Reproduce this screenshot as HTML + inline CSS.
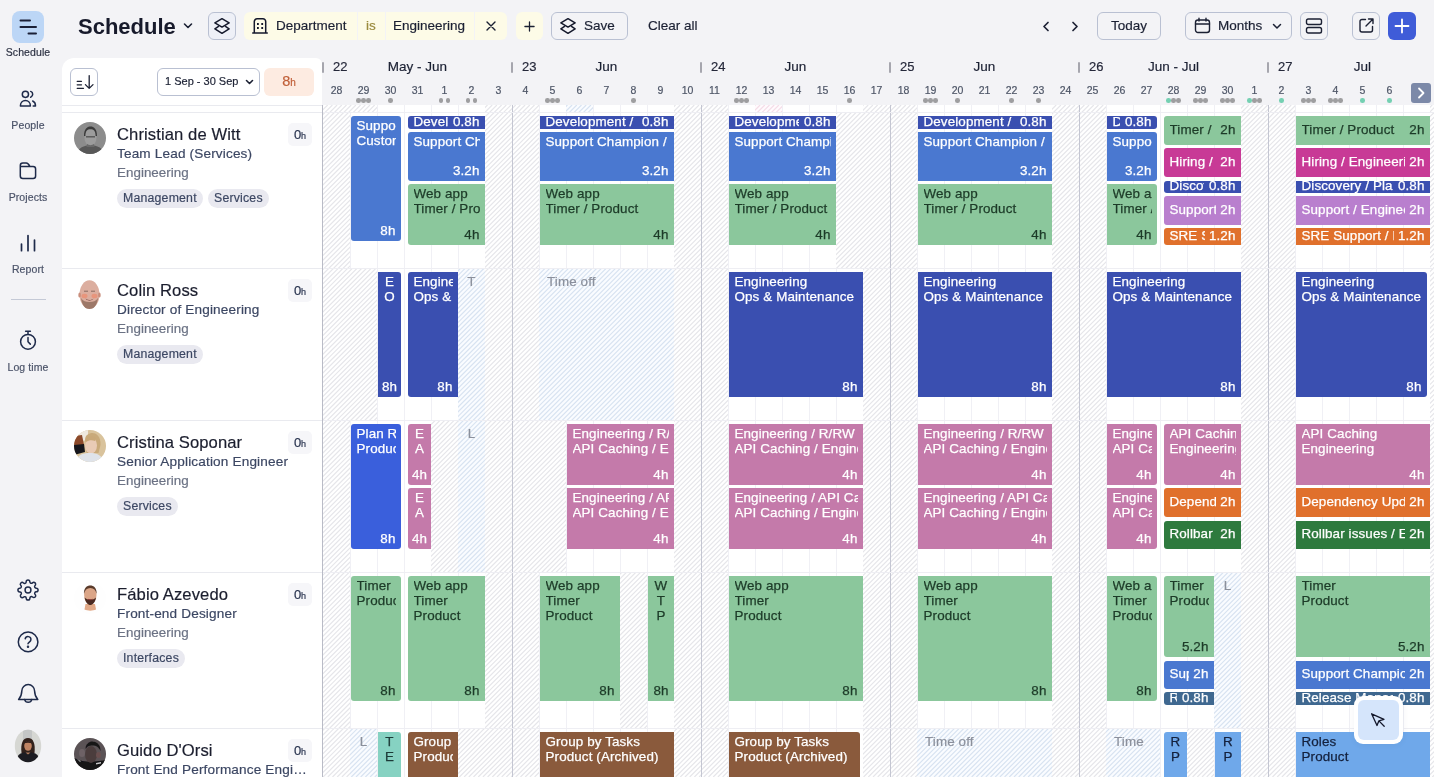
<!DOCTYPE html><html><head><meta charset="utf-8"><title>Schedule</title><style>
*{box-sizing:border-box;margin:0;padding:0}
html,body{width:1434px;height:777px;overflow:hidden;background:#f3f3f6;font-family:"Liberation Sans",sans-serif;color:#1b2033}
.abs{position:absolute}
#app{position:absolute;left:0;top:0;width:1434px;height:777px;will-change:transform;-webkit-text-stroke:0.18px currentColor}
#ttl{-webkit-text-stroke:0}
#side{position:absolute;left:0;top:0;width:57px;height:777px}
.slabel{position:absolute;left:0;width:56px;text-align:center;font-size:10.5px;color:#4a5268;letter-spacing:0.1px}
.btn{position:absolute;border:1px solid #b9c0d2;border-radius:6px;background:#f3f3f6}
.toptxt{position:absolute;font-size:13.5px;color:#1b2033;white-space:nowrap;line-height:16px}
#panel{position:absolute;left:62px;top:57.700px;width:260.300px;height:730px;background:#fff;border-radius:12px 6px 0 0;}
#panel:after{content:"";position:absolute;right:-1.200px;top:47.500px;bottom:0;width:1.300px;background:#b9bbc6}
.prow{position:absolute;left:62px;width:260px;border-top:1px solid #e9eaef}
.pname{position:absolute;left:55px;font-size:16.6px;color:#1b1e2e;white-space:nowrap;line-height:20px;letter-spacing:0.1px}
.ptitle{position:absolute;left:55px;font-size:13.6px;color:#3c4763;white-space:nowrap;line-height:16px;width:193px;overflow:hidden;text-overflow:ellipsis;letter-spacing:0.15px}
.pdept{position:absolute;left:55px;font-size:13.4px;color:#6b7284;white-space:nowrap;line-height:16px;letter-spacing:0.02px}
.tag{position:absolute;height:19px;border-radius:10px;background:#e9e9f0;color:#3c4763;font-size:12.3px;line-height:18.2px;padding:0 6px;white-space:nowrap;letter-spacing:0.2px}
.zero{position:absolute;left:226px;width:24px;height:23px;border-radius:5px;background:#f6f6f9;color:#2a3550;font-size:13px;line-height:23px;text-align:center}
.zero small{font-size:9px}
.av{position:absolute;left:12px;width:32px;height:32px;border-radius:50%;overflow:hidden}
#grid{position:absolute;left:323px;top:105px;width:1111px;height:672px;background:#fff;overflow:hidden}
.cl{position:absolute;top:0;width:1px;height:672px;background:#f0f0f5}
.wl{position:absolute;top:0;width:1px;height:672px;background:#c4c6d2}
.rl{position:absolute;left:0;width:1111px;height:1px;background:#eeeef3}
.b{position:absolute;overflow:hidden;-webkit-text-stroke:0.25px currentColor;color:#fff;font-size:13.4px;line-height:15px;white-space:nowrap;letter-spacing:0.12px}
.b .t{position:absolute;left:5.5px;right:5.5px;top:2px;overflow:hidden}
.b .hr{position:absolute;right:5.5px;bottom:3px}
.b.one .t{top:50%;margin-top:-8.5px;}
.b.one .hr{top:50%;margin-top:-8.5px;bottom:auto}
.b.nar .t{left:0;right:0;text-align:center}
.b.nar .hr{left:0;right:0;text-align:center}
.tl{position:absolute;font-size:13.4px;line-height:15px;color:#8b909c;white-space:nowrap;letter-spacing:0.12px}
.wk{position:absolute;top:59px;font-size:13px;line-height:16px;color:#25283a}
.mo{position:absolute;top:59px;font-size:13.5px;line-height:16px;color:#1b2033;text-align:center;width:120px}
.dn{position:absolute;top:83.500px;width:27px;text-align:center;font-size:10.5px;line-height:12px;color:#4d5566}
.dot{position:absolute;top:98.200px;width:4.600px;height:4.600px;border-radius:50%;background:#9e9ea0}
.dot.g{background:#74d0b2}
.tick{position:absolute;top:61.500px;width:2px;height:11.500px;background:#a6a6ae;border-radius:1px}
</style></head><body><div id="app">
<svg width="0" height="0" style="position:absolute"><defs><filter id="bl" x="-10%" y="-10%" width="120%" height="120%"><feGaussianBlur stdDeviation="0.55"/></filter></defs></svg>
<div id="side">
<div class="abs" style="left:12px;top:10.5px;width:32px;height:32px;border-radius:8px;background:#bcd6f6"></div>
<svg class="abs" style="left:12px;top:10.5px" width="32" height="32" viewBox="0 0 32 32" fill="none" stroke="#1a1f36" stroke-width="2" stroke-linecap="round"><path d="M8.5 9.5H18M8.5 16H24M16.5 22.5H24"/></svg>
<div class="slabel" style="top:46px;color:#2b3042">Schedule</div>
<svg class="abs" style="left:0;top:0" width="57" height="777" viewBox="0 0 57 777" fill="none" stroke="#1e2a4a" stroke-width="1.500" stroke-linecap="round" stroke-linejoin="round">
<circle cx="25.400" cy="94.300" r="3.100"/><path d="M20.400 105.900C20.400 102.600 22.600 100.500 25.400 100.500S30.400 102.600 30.400 105.900Z"/><path d="M30.700 91.400A3.100 3.100 0 0 1 30.700 97.200"/><path d="M32.700 101C34.500 101.800 35.500 103.600 35.500 105.900H33.200"/>
<path d="M20.300 166.400V176a2.500 2.500 0 0 0 2.500 2.500H33.100a2.500 2.500 0 0 0 2.500-2.500V168.900a2.500 2.500 0 0 0-2.500-2.500H20.300V165.600a2.500 2.500 0 0 1 2.500-2.500H26.300c1.600 0 2.600 1.500 3.500 3.300"/>
<path d="M21.500 244v6.700M28 235.500v15.200M34.500 240v10.700" stroke-width="1.700"/>
<circle cx="28" cy="341.800" r="7.400"/><path d="M28 337.500v4.300l2.300 2.300M25.600 331.300h4.800M28 331.300v3"/>
<circle cx="28.100" cy="641.900" r="9.800"/><path d="M25.200 638.800a2.900 2.900 0 0 1 5.700 1c0 1.900-2.900 2.500-2.900 4"/><circle cx="28" cy="646.800" r=".500" fill="#1e2a4a"/>
<path d="M28.200 684.600a6.400 6.400 0 0 0-6.400 6.400c0 4.400-1.500 6.500-3.200 8.400h19.200c-1.700-1.900-3.200-4-3.200-8.400a6.400 6.400 0 0 0-6.400-6.400z"/><path d="M24.700 699.600a3.600 3.600 0 0 0 7 0"/>
</svg>
<div class="slabel" style="top:119px">People</div>
<div class="slabel" style="top:191px">Projects</div>
<div class="slabel" style="top:263px">Report</div>
<div class="abs" style="left:11px;top:298.500px;width:35px;height:1px;background:#c4c9d6"></div>
<div class="slabel" style="top:361px">Log time</div>
<svg class="abs" style="left:17.200px;top:579.400px" width="22" height="22" viewBox="0 0 24 24" fill="none" stroke="#1e2a4a" stroke-width="1.600" stroke-linecap="round" stroke-linejoin="round"><circle cx="12" cy="12" r="3.200"/><path d="M19.400 15a1.650 1.650 0 0 0 .330 1.820l.060.060a2 2 0 1 1-2.830 2.830l-.060-.060a1.650 1.650 0 0 0-1.820-.330 1.650 1.650 0 0 0-1 1.510V21a2 2 0 1 1-4 0v-.090a1.650 1.650 0 0 0-1.080-1.510 1.650 1.650 0 0 0-1.820.330l-.060.060a2 2 0 1 1-2.830-2.830l.060-.060a1.650 1.650 0 0 0 .330-1.820 1.650 1.650 0 0 0-1.510-1H3a2 2 0 1 1 0-4h.090A1.650 1.650 0 0 0 4.600 9a1.650 1.650 0 0 0-.330-1.820l-.060-.060a2 2 0 1 1 2.830-2.830l.060.060a1.650 1.650 0 0 0 1.820.330H9a1.650 1.650 0 0 0 1-1.510V3a2 2 0 1 1 4 0v.090a1.650 1.650 0 0 0 1 1.510 1.650 1.650 0 0 0 1.820-.330l.060-.060a2 2 0 1 1 2.830 2.830l-.060.060a1.650 1.650 0 0 0-.330 1.820V9a1.650 1.650 0 0 0 1.510 1H21a2 2 0 1 1 0 4h-.090a1.650 1.650 0 0 0-1.510 1z"/></svg>
<svg class="abs" style="left:14px;top:729px" width="28" height="34" viewBox="0 0 28 34"><defs><clipPath id="ua"><ellipse cx="14" cy="17" rx="13.200" ry="16.300"/></clipPath></defs><g clip-path="url(#ua)"><rect width="28" height="34" fill="#d6d7d3"/><g filter="url(#bl)"><rect x="9" y="0" width="9" height="12" fill="#c4c6c6"/><path d="M7.500 24c-1-9 1-15 6.500-15s7.500 6 6.500 15z" fill="#33211c"/><ellipse cx="14" cy="17" rx="3.800" ry="4.800" fill="#c08463"/><path d="M9.500 14.500c1-3 7-3.500 9 0-3-1-6-1-9 0z" fill="#33211c"/><path d="M1 36c1-10 5-13 13-13s12 3 13 13z" fill="#1c1b20"/><path d="M11.500 23.500l2.500 2 2.500-2z" fill="#b57c5e"/></g></g></svg>
</div>
<div class="abs" style="left:78px;top:11.5px;font-size:22px;font-weight:bold;line-height:30px;color:#171a2b;letter-spacing:0px" id="ttl">Schedule</div>
<svg class="abs" style="left:183px;top:22px" width="10" height="8" viewBox="0 0 10 8" fill="none" stroke="#1b2033" stroke-width="1.6" stroke-linecap="round" stroke-linejoin="round"><path d="M1.500 2l3.500 3.500L8.500 2"/></svg>
<div class="btn" style="left:208px;top:12px;width:28px;height:28px;background:#eef0f7"></div>
<svg class="abs" style="left:214px;top:18px" width="16" height="16" viewBox="0 0 16 16" fill="none" stroke="#14182b" stroke-width="1.500" stroke-linejoin="round"><path d="M8 .700L15.100 4.900 8 9.100.900 4.900z"/><path d="M4.900 8.200L.900 10.900 8 15.300l7.100-4.400-4-2.700"/></svg>
<div class="abs" style="left:244px;top:12px;width:113px;height:28px;background:#fdfbe7;border-radius:6px 0 0 6px"></div>
<div class="abs" style="left:358px;top:12px;width:26.500px;height:28px;background:#fdfbe7"></div>
<div class="abs" style="left:385.500px;top:12px;width:88.500px;height:28px;background:#fdfbe7"></div>
<div class="abs" style="left:475px;top:12px;width:31.500px;height:28px;background:#fdfbe7;border-radius:0 6px 6px 0"></div>
<svg class="abs" style="left:252px;top:18px" width="16" height="16" viewBox="0 0 16 16" fill="none" stroke="#14182b" stroke-width="1.500" stroke-linejoin="round" stroke-linecap="round"><path d="M2.300 15V3.600A2.800 2.800 0 0 1 5.100 .800h5.800a2.800 2.800 0 0 1 2.800 2.800V15M.700 15h14.600"/><path d="M5.900 5.900v.1M10.200 5.900v.1M5.900 9.900v.1M10.200 9.900v.1" stroke-width="1.800" stroke-linecap="square"/></svg>
<div class="toptxt" style="left:276px;top:18px" id="dep">Department</div>
<div class="toptxt" style="left:366px;top:18px;color:#9a8a3c">is</div>
<div class="toptxt" style="left:393px;top:18px" id="eng">Engineering</div>
<svg class="abs" style="left:486px;top:21px" width="10" height="10" viewBox="0 0 10 10" fill="none" stroke="#1b2033" stroke-width="1.400" stroke-linecap="round"><path d="M1 1l8 8M9 1l-8 8"/></svg>
<div class="abs" style="left:516px;top:12px;width:27px;height:28px;background:#fdfbe7;border-radius:6px"></div>
<svg class="abs" style="left:524px;top:20.500px" width="11" height="11" viewBox="0 0 12 12" fill="none" stroke="#1b2033" stroke-width="1.400" stroke-linecap="round"><path d="M6 1v10M1 6h10"/></svg>
<div class="btn" style="left:551px;top:12px;width:76.500px;height:28px"></div>
<svg class="abs" style="left:560px;top:18px" width="16" height="16" viewBox="0 0 16 16" fill="none" stroke="#14182b" stroke-width="1.500" stroke-linejoin="round"><path d="M8 .700L15.100 4.900 8 9.100.900 4.900z"/><path d="M4.900 8.200L.900 10.900 8 15.300l7.100-4.400-4-2.700"/></svg>
<div class="toptxt" style="left:584px;top:18px">Save</div>
<div class="toptxt" style="left:648px;top:18px" id="clr">Clear all</div>
<svg class="abs" style="left:1042px;top:21px" width="8" height="11" viewBox="0 0 8 11" fill="none" stroke="#1b2033" stroke-width="1.700" stroke-linecap="round" stroke-linejoin="round"><path d="M6 1.500L2 5.500l4 4"/></svg>
<svg class="abs" style="left:1071px;top:21px" width="8" height="11" viewBox="0 0 8 11" fill="none" stroke="#1b2033" stroke-width="1.700" stroke-linecap="round" stroke-linejoin="round"><path d="M2 1.500l4 4-4 4"/></svg>
<div class="btn" style="left:1097px;top:12px;width:64px;height:28px"></div>
<div class="toptxt" style="left:1111px;top:18px">Today</div>
<div class="btn" style="left:1185px;top:12px;width:107px;height:28px"></div>
<svg class="abs" style="left:1193.500px;top:17px" width="17" height="17" viewBox="0 0 17 17" fill="none" stroke="#1b2033" stroke-width="1.400" stroke-linecap="round" stroke-linejoin="round"><rect x="1.500" y="3" width="14" height="12.500" rx="2.500"/><path d="M1.500 7h14M5 1.200V4M12 1.200V4"/></svg>
<div class="toptxt" style="left:1218px;top:18px">Months</div>
<svg class="abs" style="left:1272px;top:23px" width="10" height="7" viewBox="0 0 10 7" fill="none" stroke="#1b2033" stroke-width="1.500" stroke-linecap="round" stroke-linejoin="round"><path d="M1.500 1.500l3.500 3.500 3.500-3.500"/></svg>
<div class="btn" style="left:1300px;top:12px;width:28px;height:28px"></div>
<svg class="abs" style="left:1305px;top:17px" width="18" height="18" viewBox="0 0 18 18" fill="none" stroke="#1b2033" stroke-width="1.400" stroke-linejoin="round"><rect x="1.500" y="2" width="15" height="5.500" rx="1.800"/><rect x="1.500" y="10.500" width="15" height="5.500" rx="1.800"/></svg>
<div class="btn" style="left:1352px;top:12px;width:28px;height:28px"></div>
<svg class="abs" style="left:1357.500px;top:17px" width="17" height="17" viewBox="0 0 17 17" fill="none" stroke="#1b2033" stroke-width="1.400" stroke-linecap="round" stroke-linejoin="round"><path d="M7.500 2.500H4A2 2 0 0 0 2 4.500v8.500a2 2 0 0 0 2 2h8.500a2 2 0 0 0 2-2V9.500"/><path d="M10.500 2h4.500v4.500M15 2L8 9"/></svg>
<div class="abs" style="left:1388px;top:12px;width:28px;height:28px;border-radius:6px;background:#3f5cd8"></div>
<svg class="abs" style="left:1394px;top:18px" width="16" height="16" viewBox="0 0 16 16" fill="none" stroke="#fff" stroke-width="1.800" stroke-linecap="round"><path d="M8 1.500v13M1.500 8h13"/></svg>
<div class="tick" style="left:322.2px"></div>
<div class="wk" style="left:333px">22</div>
<div class="mo" style="left:357.5px">May - Jun</div>
<div class="tick" style="left:511.2px"></div>
<div class="wk" style="left:522px">23</div>
<div class="mo" style="left:546.5px">Jun</div>
<div class="tick" style="left:700.2px"></div>
<div class="wk" style="left:711px">24</div>
<div class="mo" style="left:735.5px">Jun</div>
<div class="tick" style="left:889.2px"></div>
<div class="wk" style="left:900px">25</div>
<div class="mo" style="left:924.5px">Jun</div>
<div class="tick" style="left:1078.2px"></div>
<div class="wk" style="left:1089px">26</div>
<div class="mo" style="left:1113.5px">Jun - Jul</div>
<div class="tick" style="left:1267.2px"></div>
<div class="wk" style="left:1278px">27</div>
<div class="mo" style="left:1302.5px">Jul</div>
<div class="dn" style="left:323px">28</div>
<div class="dn" style="left:350px">29</div>
<div class="dot" style="left:356.2px"></div>
<div class="dot" style="left:361.2px"></div>
<div class="dot" style="left:366.2px"></div>
<div class="dn" style="left:377px">30</div>
<div class="dot" style="left:388.2px"></div>
<div class="dn" style="left:404px">31</div>
<div class="dn" style="left:431px">1</div>
<div class="dot" style="left:438.7px"></div>
<div class="dot" style="left:445.7px"></div>
<div class="dn" style="left:458px">2</div>
<div class="dot" style="left:465.7px"></div>
<div class="dot" style="left:472.7px"></div>
<div class="dn" style="left:485px">3</div>
<div class="dn" style="left:512px">4</div>
<div class="dn" style="left:539px">5</div>
<div class="dot" style="left:545.2px"></div>
<div class="dot" style="left:550.2px"></div>
<div class="dot" style="left:555.2px"></div>
<div class="dn" style="left:566px">6</div>
<div class="dn" style="left:593px">7</div>
<div class="dn" style="left:620px">8</div>
<div class="dot" style="left:631.2px"></div>
<div class="dn" style="left:647px">9</div>
<div class="dn" style="left:674px">10</div>
<div class="dn" style="left:701px">11</div>
<div class="dn" style="left:728px">12</div>
<div class="dot" style="left:734.2px"></div>
<div class="dot" style="left:739.2px"></div>
<div class="dot" style="left:744.2px"></div>
<div class="dn" style="left:755px">13</div>
<div class="dn" style="left:782px">14</div>
<div class="dn" style="left:809px">15</div>
<div class="dn" style="left:836px">16</div>
<div class="dot" style="left:847.2px"></div>
<div class="dn" style="left:863px">17</div>
<div class="dn" style="left:890px">18</div>
<div class="dn" style="left:917px">19</div>
<div class="dot" style="left:923.2px"></div>
<div class="dot" style="left:928.2px"></div>
<div class="dot" style="left:933.2px"></div>
<div class="dn" style="left:944px">20</div>
<div class="dot" style="left:955.2px"></div>
<div class="dn" style="left:971px">21</div>
<div class="dn" style="left:998px">22</div>
<div class="dot" style="left:1009.2px"></div>
<div class="dn" style="left:1025px">23</div>
<div class="dot" style="left:1036.2px"></div>
<div class="dn" style="left:1052px">24</div>
<div class="dn" style="left:1079px">25</div>
<div class="dn" style="left:1106px">26</div>
<div class="dn" style="left:1133px">27</div>
<div class="dn" style="left:1160px">28</div>
<div class="dot g" style="left:1166.2px"></div>
<div class="dot" style="left:1171.2px"></div>
<div class="dot" style="left:1176.2px"></div>
<div class="dn" style="left:1187px">29</div>
<div class="dot" style="left:1193.2px"></div>
<div class="dot" style="left:1198.2px"></div>
<div class="dot" style="left:1203.2px"></div>
<div class="dn" style="left:1214px">30</div>
<div class="dot" style="left:1220.2px"></div>
<div class="dot" style="left:1225.2px"></div>
<div class="dot" style="left:1230.2px"></div>
<div class="dn" style="left:1241px">1</div>
<div class="dot g" style="left:1247.2px"></div>
<div class="dot" style="left:1252.2px"></div>
<div class="dot" style="left:1257.2px"></div>
<div class="dn" style="left:1268px">2</div>
<div class="dot g" style="left:1279.2px"></div>
<div class="dn" style="left:1295px">3</div>
<div class="dot" style="left:1301.2px"></div>
<div class="dot" style="left:1306.2px"></div>
<div class="dot" style="left:1311.2px"></div>
<div class="dn" style="left:1322px">4</div>
<div class="dot" style="left:1328.2px"></div>
<div class="dot" style="left:1333.2px"></div>
<div class="dot" style="left:1338.2px"></div>
<div class="dn" style="left:1349px">5</div>
<div class="dot g" style="left:1360.2px"></div>
<div class="dn" style="left:1376px">6</div>
<div class="dot g" style="left:1387.2px"></div>
<div class="dn" style="left:1403px">7</div>
<div class="abs" style="left:1411px;top:83px;width:20px;height:20px;border-radius:3px;background:#7c89a8"></div>
<svg class="abs" style="left:1416px;top:87px" width="10" height="12" viewBox="0 0 10 12" fill="none" stroke="#fff" stroke-width="1.800" stroke-linecap="round" stroke-linejoin="round"><path d="M3 1.500L7.500 6 3 10.500"/></svg>
<div id="grid">
<div class="cl" style="left:27px"></div>
<div class="cl" style="left:54px"></div>
<div class="cl" style="left:81px"></div>
<div class="cl" style="left:108px"></div>
<div class="cl" style="left:135px"></div>
<div class="cl" style="left:162px"></div>
<div class="cl" style="left:216px"></div>
<div class="cl" style="left:243px"></div>
<div class="cl" style="left:270px"></div>
<div class="cl" style="left:297px"></div>
<div class="cl" style="left:324px"></div>
<div class="cl" style="left:351px"></div>
<div class="cl" style="left:405px"></div>
<div class="cl" style="left:432px"></div>
<div class="cl" style="left:459px"></div>
<div class="cl" style="left:486px"></div>
<div class="cl" style="left:513px"></div>
<div class="cl" style="left:540px"></div>
<div class="cl" style="left:594px"></div>
<div class="cl" style="left:621px"></div>
<div class="cl" style="left:648px"></div>
<div class="cl" style="left:675px"></div>
<div class="cl" style="left:702px"></div>
<div class="cl" style="left:729px"></div>
<div class="cl" style="left:783px"></div>
<div class="cl" style="left:810px"></div>
<div class="cl" style="left:837px"></div>
<div class="cl" style="left:864px"></div>
<div class="cl" style="left:891px"></div>
<div class="cl" style="left:918px"></div>
<div class="cl" style="left:972px"></div>
<div class="cl" style="left:999px"></div>
<div class="cl" style="left:1026px"></div>
<div class="cl" style="left:1053px"></div>
<div class="cl" style="left:1080px"></div>
<div class="cl" style="left:1107px"></div>
<svg class="abs" style="left:0;top:0" width="1111" height="672" viewBox="0 0 1111 672"><defs>
<clipPath id="cg"><rect x="0" y="0" width="54" height="7"/><rect x="162" y="0" width="54" height="7"/><rect x="351" y="0" width="54" height="7"/><rect x="540" y="0" width="54" height="7"/><rect x="729" y="0" width="54" height="7"/><rect x="918" y="0" width="54" height="7"/><rect x="1107" y="0" width="27" height="7"/><rect x="0" y="7" width="27" height="156"/><rect x="162" y="7" width="54" height="156"/><rect x="351" y="7" width="54" height="156"/><rect x="513" y="7" width="81" height="156"/><rect x="729" y="7" width="54" height="156"/><rect x="918" y="7" width="54" height="156"/><rect x="1107" y="7" width="27" height="156"/><rect x="0" y="163" width="54" height="152"/><rect x="162" y="163" width="54" height="152"/><rect x="351" y="163" width="54" height="152"/><rect x="540" y="163" width="54" height="152"/><rect x="729" y="163" width="54" height="152"/><rect x="918" y="163" width="54" height="152"/><rect x="1107" y="163" width="27" height="152"/><rect x="0" y="315" width="27" height="152"/><rect x="108" y="315" width="27" height="152"/><rect x="162" y="315" width="81" height="152"/><rect x="351" y="315" width="54" height="152"/><rect x="540" y="315" width="54" height="152"/><rect x="729" y="315" width="54" height="152"/><rect x="918" y="315" width="54" height="152"/><rect x="1107" y="315" width="27" height="152"/><rect x="0" y="467" width="27" height="156"/><rect x="162" y="467" width="54" height="156"/><rect x="297" y="467" width="27" height="156"/><rect x="351" y="467" width="54" height="156"/><rect x="540" y="467" width="54" height="156"/><rect x="729" y="467" width="54" height="156"/><rect x="918" y="467" width="54" height="156"/><rect x="1107" y="467" width="27" height="156"/><rect x="0" y="623" width="27" height="49"/><rect x="135" y="623" width="81" height="49"/><rect x="351" y="623" width="54" height="49"/><rect x="540" y="623" width="54" height="49"/><rect x="729" y="623" width="54" height="49"/><rect x="864" y="623" width="27" height="49"/><rect x="918" y="623" width="54" height="49"/><rect x="1107" y="623" width="27" height="49"/></clipPath>
<clipPath id="cb"><rect x="243" y="0" width="27" height="7"/><rect x="135" y="163" width="27" height="152"/><rect x="216" y="163" width="135" height="152"/><rect x="135" y="315" width="27" height="152"/><rect x="891" y="467" width="27" height="156"/><rect x="27" y="623" width="27" height="49"/><rect x="594" y="623" width="135" height="49"/><rect x="783" y="623" width="54" height="49"/></clipPath>
<clipPath id="cp"><rect x="432" y="0" width="27" height="7"/></clipPath>
</defs>
<rect width="1111" height="672" fill="#ffffff" clip-path="url(#cg)"/>
<path d="M-672 672l672 -672M-667.3 672l672 -672M-662.6 672l672 -672M-657.9 672l672 -672M-653.2 672l672 -672M-648.5 672l672 -672M-643.8 672l672 -672M-639.1 672l672 -672M-634.4 672l672 -672M-629.7 672l672 -672M-625 672l672 -672M-620.3 672l672 -672M-615.6 672l672 -672M-610.9 672l672 -672M-606.2 672l672 -672M-601.5 672l672 -672M-596.8 672l672 -672M-592.1 672l672 -672M-587.4 672l672 -672M-582.7 672l672 -672M-578 672l672 -672M-573.3 672l672 -672M-568.6 672l672 -672M-563.9 672l672 -672M-559.2 672l672 -672M-554.5 672l672 -672M-549.8 672l672 -672M-545.1 672l672 -672M-540.4 672l672 -672M-535.7 672l672 -672M-531 672l672 -672M-526.3 672l672 -672M-521.6 672l672 -672M-516.9 672l672 -672M-512.2 672l672 -672M-507.5 672l672 -672M-502.8 672l672 -672M-498.1 672l672 -672M-493.4 672l672 -672M-488.7 672l672 -672M-484 672l672 -672M-479.3 672l672 -672M-474.6 672l672 -672M-469.9 672l672 -672M-465.2 672l672 -672M-460.5 672l672 -672M-455.8 672l672 -672M-451.1 672l672 -672M-446.4 672l672 -672M-441.7 672l672 -672M-437 672l672 -672M-432.3 672l672 -672M-427.6 672l672 -672M-422.9 672l672 -672M-418.2 672l672 -672M-413.5 672l672 -672M-408.8 672l672 -672M-404.1 672l672 -672M-399.4 672l672 -672M-394.7 672l672 -672M-390 672l672 -672M-385.3 672l672 -672M-380.6 672l672 -672M-375.9 672l672 -672M-371.2 672l672 -672M-366.5 672l672 -672M-361.8 672l672 -672M-357.1 672l672 -672M-352.4 672l672 -672M-347.7 672l672 -672M-343 672l672 -672M-338.3 672l672 -672M-333.6 672l672 -672M-328.9 672l672 -672M-324.2 672l672 -672M-319.5 672l672 -672M-314.8 672l672 -672M-310.1 672l672 -672M-305.4 672l672 -672M-300.7 672l672 -672M-296 672l672 -672M-291.3 672l672 -672M-286.6 672l672 -672M-281.9 672l672 -672M-277.2 672l672 -672M-272.5 672l672 -672M-267.8 672l672 -672M-263.1 672l672 -672M-258.4 672l672 -672M-253.7 672l672 -672M-249 672l672 -672M-244.3 672l672 -672M-239.6 672l672 -672M-234.9 672l672 -672M-230.2 672l672 -672M-225.5 672l672 -672M-220.8 672l672 -672M-216.1 672l672 -672M-211.4 672l672 -672M-206.7 672l672 -672M-202 672l672 -672M-197.3 672l672 -672M-192.6 672l672 -672M-187.9 672l672 -672M-183.2 672l672 -672M-178.5 672l672 -672M-173.8 672l672 -672M-169.1 672l672 -672M-164.4 672l672 -672M-159.7 672l672 -672M-155 672l672 -672M-150.3 672l672 -672M-145.6 672l672 -672M-140.9 672l672 -672M-136.2 672l672 -672M-131.5 672l672 -672M-126.8 672l672 -672M-122.1 672l672 -672M-117.4 672l672 -672M-112.7 672l672 -672M-108 672l672 -672M-103.3 672l672 -672M-98.6 672l672 -672M-93.9 672l672 -672M-89.2 672l672 -672M-84.5 672l672 -672M-79.8 672l672 -672M-75.1 672l672 -672M-70.4 672l672 -672M-65.7 672l672 -672M-61 672l672 -672M-56.3 672l672 -672M-51.6 672l672 -672M-46.9 672l672 -672M-42.2 672l672 -672M-37.5 672l672 -672M-32.8 672l672 -672M-28.1 672l672 -672M-23.4 672l672 -672M-18.7 672l672 -672M-14 672l672 -672M-9.3 672l672 -672M-4.6 672l672 -672M0.1 672l672 -672M4.8 672l672 -672M9.5 672l672 -672M14.2 672l672 -672M18.9 672l672 -672M23.6 672l672 -672M28.3 672l672 -672M33 672l672 -672M37.7 672l672 -672M42.4 672l672 -672M47.1 672l672 -672M51.8 672l672 -672M56.5 672l672 -672M61.2 672l672 -672M65.9 672l672 -672M70.6 672l672 -672M75.3 672l672 -672M80 672l672 -672M84.7 672l672 -672M89.4 672l672 -672M94.1 672l672 -672M98.8 672l672 -672M103.5 672l672 -672M108.2 672l672 -672M112.9 672l672 -672M117.6 672l672 -672M122.3 672l672 -672M127 672l672 -672M131.7 672l672 -672M136.4 672l672 -672M141.1 672l672 -672M145.8 672l672 -672M150.5 672l672 -672M155.2 672l672 -672M159.9 672l672 -672M164.6 672l672 -672M169.3 672l672 -672M174 672l672 -672M178.7 672l672 -672M183.4 672l672 -672M188.1 672l672 -672M192.8 672l672 -672M197.5 672l672 -672M202.2 672l672 -672M206.9 672l672 -672M211.6 672l672 -672M216.3 672l672 -672M221 672l672 -672M225.7 672l672 -672M230.4 672l672 -672M235.1 672l672 -672M239.8 672l672 -672M244.5 672l672 -672M249.2 672l672 -672M253.9 672l672 -672M258.6 672l672 -672M263.3 672l672 -672M268 672l672 -672M272.7 672l672 -672M277.4 672l672 -672M282.1 672l672 -672M286.8 672l672 -672M291.5 672l672 -672M296.2 672l672 -672M300.9 672l672 -672M305.6 672l672 -672M310.3 672l672 -672M315 672l672 -672M319.7 672l672 -672M324.4 672l672 -672M329.1 672l672 -672M333.8 672l672 -672M338.5 672l672 -672M343.2 672l672 -672M347.9 672l672 -672M352.6 672l672 -672M357.3 672l672 -672M362 672l672 -672M366.7 672l672 -672M371.4 672l672 -672M376.1 672l672 -672M380.8 672l672 -672M385.5 672l672 -672M390.2 672l672 -672M394.9 672l672 -672M399.6 672l672 -672M404.3 672l672 -672M409 672l672 -672M413.7 672l672 -672M418.4 672l672 -672M423.1 672l672 -672M427.8 672l672 -672M432.5 672l672 -672M437.2 672l672 -672M441.9 672l672 -672M446.6 672l672 -672M451.3 672l672 -672M456 672l672 -672M460.7 672l672 -672M465.4 672l672 -672M470.1 672l672 -672M474.8 672l672 -672M479.5 672l672 -672M484.2 672l672 -672M488.9 672l672 -672M493.6 672l672 -672M498.3 672l672 -672M503 672l672 -672M507.7 672l672 -672M512.4 672l672 -672M517.1 672l672 -672M521.8 672l672 -672M526.5 672l672 -672M531.2 672l672 -672M535.9 672l672 -672M540.6 672l672 -672M545.3 672l672 -672M550 672l672 -672M554.7 672l672 -672M559.4 672l672 -672M564.1 672l672 -672M568.8 672l672 -672M573.5 672l672 -672M578.2 672l672 -672M582.9 672l672 -672M587.6 672l672 -672M592.3 672l672 -672M597 672l672 -672M601.7 672l672 -672M606.4 672l672 -672M611.1 672l672 -672M615.8 672l672 -672M620.5 672l672 -672M625.2 672l672 -672M629.9 672l672 -672M634.6 672l672 -672M639.3 672l672 -672M644 672l672 -672M648.7 672l672 -672M653.4 672l672 -672M658.1 672l672 -672M662.8 672l672 -672M667.5 672l672 -672M672.2 672l672 -672M676.9 672l672 -672M681.6 672l672 -672M686.3 672l672 -672M691 672l672 -672M695.7 672l672 -672M700.4 672l672 -672M705.1 672l672 -672M709.8 672l672 -672M714.5 672l672 -672M719.2 672l672 -672M723.9 672l672 -672M728.6 672l672 -672M733.3 672l672 -672M738 672l672 -672M742.7 672l672 -672M747.4 672l672 -672M752.1 672l672 -672M756.8 672l672 -672M761.5 672l672 -672M766.2 672l672 -672M770.9 672l672 -672M775.6 672l672 -672M780.3 672l672 -672M785 672l672 -672M789.7 672l672 -672M794.4 672l672 -672M799.1 672l672 -672M803.8 672l672 -672M808.5 672l672 -672M813.2 672l672 -672M817.9 672l672 -672M822.6 672l672 -672M827.3 672l672 -672M832 672l672 -672M836.7 672l672 -672M841.4 672l672 -672M846.1 672l672 -672M850.8 672l672 -672M855.5 672l672 -672M860.2 672l672 -672M864.9 672l672 -672M869.6 672l672 -672M874.3 672l672 -672M879 672l672 -672M883.7 672l672 -672M888.4 672l672 -672M893.1 672l672 -672M897.8 672l672 -672M902.5 672l672 -672M907.2 672l672 -672M911.9 672l672 -672M916.6 672l672 -672M921.3 672l672 -672M926 672l672 -672M930.7 672l672 -672M935.4 672l672 -672M940.1 672l672 -672M944.8 672l672 -672M949.5 672l672 -672M954.2 672l672 -672M958.9 672l672 -672M963.6 672l672 -672M968.3 672l672 -672M973 672l672 -672M977.7 672l672 -672M982.4 672l672 -672M987.1 672l672 -672M991.8 672l672 -672M996.5 672l672 -672M1001.2 672l672 -672M1005.9 672l672 -672M1010.6 672l672 -672M1015.3 672l672 -672M1020 672l672 -672M1024.7 672l672 -672M1029.4 672l672 -672M1034.1 672l672 -672M1038.8 672l672 -672M1043.5 672l672 -672M1048.2 672l672 -672M1052.9 672l672 -672M1057.6 672l672 -672M1062.3 672l672 -672M1067 672l672 -672M1071.7 672l672 -672M1076.4 672l672 -672M1081.1 672l672 -672M1085.8 672l672 -672M1090.5 672l672 -672M1095.2 672l672 -672M1099.9 672l672 -672M1104.6 672l672 -672M1109.3 672l672 -672M1114 672l672 -672" clip-path="url(#cg)" stroke="#e6e6ea" stroke-width="1.200" fill="none"/>
<rect width="1111" height="672" fill="#fafcff" clip-path="url(#cb)"/>
<path d="M-672 672l672 -672M-667.3 672l672 -672M-662.6 672l672 -672M-657.9 672l672 -672M-653.2 672l672 -672M-648.5 672l672 -672M-643.8 672l672 -672M-639.1 672l672 -672M-634.4 672l672 -672M-629.7 672l672 -672M-625 672l672 -672M-620.3 672l672 -672M-615.6 672l672 -672M-610.9 672l672 -672M-606.2 672l672 -672M-601.5 672l672 -672M-596.8 672l672 -672M-592.1 672l672 -672M-587.4 672l672 -672M-582.7 672l672 -672M-578 672l672 -672M-573.3 672l672 -672M-568.6 672l672 -672M-563.9 672l672 -672M-559.2 672l672 -672M-554.5 672l672 -672M-549.8 672l672 -672M-545.1 672l672 -672M-540.4 672l672 -672M-535.7 672l672 -672M-531 672l672 -672M-526.3 672l672 -672M-521.6 672l672 -672M-516.9 672l672 -672M-512.2 672l672 -672M-507.5 672l672 -672M-502.8 672l672 -672M-498.1 672l672 -672M-493.4 672l672 -672M-488.7 672l672 -672M-484 672l672 -672M-479.3 672l672 -672M-474.6 672l672 -672M-469.9 672l672 -672M-465.2 672l672 -672M-460.5 672l672 -672M-455.8 672l672 -672M-451.1 672l672 -672M-446.4 672l672 -672M-441.7 672l672 -672M-437 672l672 -672M-432.3 672l672 -672M-427.6 672l672 -672M-422.9 672l672 -672M-418.2 672l672 -672M-413.5 672l672 -672M-408.8 672l672 -672M-404.1 672l672 -672M-399.4 672l672 -672M-394.7 672l672 -672M-390 672l672 -672M-385.3 672l672 -672M-380.6 672l672 -672M-375.9 672l672 -672M-371.2 672l672 -672M-366.5 672l672 -672M-361.8 672l672 -672M-357.1 672l672 -672M-352.4 672l672 -672M-347.7 672l672 -672M-343 672l672 -672M-338.3 672l672 -672M-333.6 672l672 -672M-328.9 672l672 -672M-324.2 672l672 -672M-319.5 672l672 -672M-314.8 672l672 -672M-310.1 672l672 -672M-305.4 672l672 -672M-300.7 672l672 -672M-296 672l672 -672M-291.3 672l672 -672M-286.6 672l672 -672M-281.9 672l672 -672M-277.2 672l672 -672M-272.5 672l672 -672M-267.8 672l672 -672M-263.1 672l672 -672M-258.4 672l672 -672M-253.7 672l672 -672M-249 672l672 -672M-244.3 672l672 -672M-239.6 672l672 -672M-234.9 672l672 -672M-230.2 672l672 -672M-225.5 672l672 -672M-220.8 672l672 -672M-216.1 672l672 -672M-211.4 672l672 -672M-206.7 672l672 -672M-202 672l672 -672M-197.3 672l672 -672M-192.6 672l672 -672M-187.9 672l672 -672M-183.2 672l672 -672M-178.5 672l672 -672M-173.8 672l672 -672M-169.1 672l672 -672M-164.4 672l672 -672M-159.7 672l672 -672M-155 672l672 -672M-150.3 672l672 -672M-145.6 672l672 -672M-140.9 672l672 -672M-136.2 672l672 -672M-131.5 672l672 -672M-126.8 672l672 -672M-122.1 672l672 -672M-117.4 672l672 -672M-112.7 672l672 -672M-108 672l672 -672M-103.3 672l672 -672M-98.6 672l672 -672M-93.9 672l672 -672M-89.2 672l672 -672M-84.5 672l672 -672M-79.8 672l672 -672M-75.1 672l672 -672M-70.4 672l672 -672M-65.7 672l672 -672M-61 672l672 -672M-56.3 672l672 -672M-51.6 672l672 -672M-46.9 672l672 -672M-42.2 672l672 -672M-37.5 672l672 -672M-32.8 672l672 -672M-28.1 672l672 -672M-23.4 672l672 -672M-18.7 672l672 -672M-14 672l672 -672M-9.3 672l672 -672M-4.6 672l672 -672M0.1 672l672 -672M4.8 672l672 -672M9.5 672l672 -672M14.2 672l672 -672M18.9 672l672 -672M23.6 672l672 -672M28.3 672l672 -672M33 672l672 -672M37.7 672l672 -672M42.4 672l672 -672M47.1 672l672 -672M51.8 672l672 -672M56.5 672l672 -672M61.2 672l672 -672M65.9 672l672 -672M70.6 672l672 -672M75.3 672l672 -672M80 672l672 -672M84.7 672l672 -672M89.4 672l672 -672M94.1 672l672 -672M98.8 672l672 -672M103.5 672l672 -672M108.2 672l672 -672M112.9 672l672 -672M117.6 672l672 -672M122.3 672l672 -672M127 672l672 -672M131.7 672l672 -672M136.4 672l672 -672M141.1 672l672 -672M145.8 672l672 -672M150.5 672l672 -672M155.2 672l672 -672M159.9 672l672 -672M164.6 672l672 -672M169.3 672l672 -672M174 672l672 -672M178.7 672l672 -672M183.4 672l672 -672M188.1 672l672 -672M192.8 672l672 -672M197.5 672l672 -672M202.2 672l672 -672M206.9 672l672 -672M211.6 672l672 -672M216.3 672l672 -672M221 672l672 -672M225.7 672l672 -672M230.4 672l672 -672M235.1 672l672 -672M239.8 672l672 -672M244.5 672l672 -672M249.2 672l672 -672M253.9 672l672 -672M258.6 672l672 -672M263.3 672l672 -672M268 672l672 -672M272.7 672l672 -672M277.4 672l672 -672M282.1 672l672 -672M286.8 672l672 -672M291.5 672l672 -672M296.2 672l672 -672M300.9 672l672 -672M305.6 672l672 -672M310.3 672l672 -672M315 672l672 -672M319.7 672l672 -672M324.4 672l672 -672M329.1 672l672 -672M333.8 672l672 -672M338.5 672l672 -672M343.2 672l672 -672M347.9 672l672 -672M352.6 672l672 -672M357.3 672l672 -672M362 672l672 -672M366.7 672l672 -672M371.4 672l672 -672M376.1 672l672 -672M380.8 672l672 -672M385.5 672l672 -672M390.2 672l672 -672M394.9 672l672 -672M399.6 672l672 -672M404.3 672l672 -672M409 672l672 -672M413.7 672l672 -672M418.4 672l672 -672M423.1 672l672 -672M427.8 672l672 -672M432.5 672l672 -672M437.2 672l672 -672M441.9 672l672 -672M446.6 672l672 -672M451.3 672l672 -672M456 672l672 -672M460.7 672l672 -672M465.4 672l672 -672M470.1 672l672 -672M474.8 672l672 -672M479.5 672l672 -672M484.2 672l672 -672M488.9 672l672 -672M493.6 672l672 -672M498.3 672l672 -672M503 672l672 -672M507.7 672l672 -672M512.4 672l672 -672M517.1 672l672 -672M521.8 672l672 -672M526.5 672l672 -672M531.2 672l672 -672M535.9 672l672 -672M540.6 672l672 -672M545.3 672l672 -672M550 672l672 -672M554.7 672l672 -672M559.4 672l672 -672M564.1 672l672 -672M568.8 672l672 -672M573.5 672l672 -672M578.2 672l672 -672M582.9 672l672 -672M587.6 672l672 -672M592.3 672l672 -672M597 672l672 -672M601.7 672l672 -672M606.4 672l672 -672M611.1 672l672 -672M615.8 672l672 -672M620.5 672l672 -672M625.2 672l672 -672M629.9 672l672 -672M634.6 672l672 -672M639.3 672l672 -672M644 672l672 -672M648.7 672l672 -672M653.4 672l672 -672M658.1 672l672 -672M662.8 672l672 -672M667.5 672l672 -672M672.2 672l672 -672M676.9 672l672 -672M681.6 672l672 -672M686.3 672l672 -672M691 672l672 -672M695.7 672l672 -672M700.4 672l672 -672M705.1 672l672 -672M709.8 672l672 -672M714.5 672l672 -672M719.2 672l672 -672M723.9 672l672 -672M728.6 672l672 -672M733.3 672l672 -672M738 672l672 -672M742.7 672l672 -672M747.4 672l672 -672M752.1 672l672 -672M756.8 672l672 -672M761.5 672l672 -672M766.2 672l672 -672M770.9 672l672 -672M775.6 672l672 -672M780.3 672l672 -672M785 672l672 -672M789.7 672l672 -672M794.4 672l672 -672M799.1 672l672 -672M803.8 672l672 -672M808.5 672l672 -672M813.2 672l672 -672M817.9 672l672 -672M822.6 672l672 -672M827.3 672l672 -672M832 672l672 -672M836.7 672l672 -672M841.4 672l672 -672M846.1 672l672 -672M850.8 672l672 -672M855.5 672l672 -672M860.2 672l672 -672M864.9 672l672 -672M869.6 672l672 -672M874.3 672l672 -672M879 672l672 -672M883.7 672l672 -672M888.4 672l672 -672M893.1 672l672 -672M897.8 672l672 -672M902.5 672l672 -672M907.2 672l672 -672M911.9 672l672 -672M916.6 672l672 -672M921.3 672l672 -672M926 672l672 -672M930.7 672l672 -672M935.4 672l672 -672M940.1 672l672 -672M944.8 672l672 -672M949.5 672l672 -672M954.2 672l672 -672M958.9 672l672 -672M963.6 672l672 -672M968.3 672l672 -672M973 672l672 -672M977.7 672l672 -672M982.4 672l672 -672M987.1 672l672 -672M991.8 672l672 -672M996.5 672l672 -672M1001.2 672l672 -672M1005.9 672l672 -672M1010.6 672l672 -672M1015.3 672l672 -672M1020 672l672 -672M1024.7 672l672 -672M1029.4 672l672 -672M1034.1 672l672 -672M1038.8 672l672 -672M1043.5 672l672 -672M1048.2 672l672 -672M1052.9 672l672 -672M1057.6 672l672 -672M1062.3 672l672 -672M1067 672l672 -672M1071.7 672l672 -672M1076.4 672l672 -672M1081.1 672l672 -672M1085.8 672l672 -672M1090.5 672l672 -672M1095.2 672l672 -672M1099.9 672l672 -672M1104.6 672l672 -672M1109.3 672l672 -672M1114 672l672 -672" clip-path="url(#cb)" stroke="#d8e3f1" stroke-width="1.200" fill="none"/>
<rect width="1111" height="672" fill="#fffbfd" clip-path="url(#cp)"/>
<path d="M-672 672l672 -672M-667.3 672l672 -672M-662.6 672l672 -672M-657.9 672l672 -672M-653.2 672l672 -672M-648.5 672l672 -672M-643.8 672l672 -672M-639.1 672l672 -672M-634.4 672l672 -672M-629.7 672l672 -672M-625 672l672 -672M-620.3 672l672 -672M-615.6 672l672 -672M-610.9 672l672 -672M-606.2 672l672 -672M-601.5 672l672 -672M-596.8 672l672 -672M-592.1 672l672 -672M-587.4 672l672 -672M-582.7 672l672 -672M-578 672l672 -672M-573.3 672l672 -672M-568.6 672l672 -672M-563.9 672l672 -672M-559.2 672l672 -672M-554.5 672l672 -672M-549.8 672l672 -672M-545.1 672l672 -672M-540.4 672l672 -672M-535.7 672l672 -672M-531 672l672 -672M-526.3 672l672 -672M-521.6 672l672 -672M-516.9 672l672 -672M-512.2 672l672 -672M-507.5 672l672 -672M-502.8 672l672 -672M-498.1 672l672 -672M-493.4 672l672 -672M-488.7 672l672 -672M-484 672l672 -672M-479.3 672l672 -672M-474.6 672l672 -672M-469.9 672l672 -672M-465.2 672l672 -672M-460.5 672l672 -672M-455.8 672l672 -672M-451.1 672l672 -672M-446.4 672l672 -672M-441.7 672l672 -672M-437 672l672 -672M-432.3 672l672 -672M-427.6 672l672 -672M-422.9 672l672 -672M-418.2 672l672 -672M-413.5 672l672 -672M-408.8 672l672 -672M-404.1 672l672 -672M-399.4 672l672 -672M-394.7 672l672 -672M-390 672l672 -672M-385.3 672l672 -672M-380.6 672l672 -672M-375.9 672l672 -672M-371.2 672l672 -672M-366.5 672l672 -672M-361.8 672l672 -672M-357.1 672l672 -672M-352.4 672l672 -672M-347.7 672l672 -672M-343 672l672 -672M-338.3 672l672 -672M-333.6 672l672 -672M-328.9 672l672 -672M-324.2 672l672 -672M-319.5 672l672 -672M-314.8 672l672 -672M-310.1 672l672 -672M-305.4 672l672 -672M-300.7 672l672 -672M-296 672l672 -672M-291.3 672l672 -672M-286.6 672l672 -672M-281.9 672l672 -672M-277.2 672l672 -672M-272.5 672l672 -672M-267.8 672l672 -672M-263.1 672l672 -672M-258.4 672l672 -672M-253.7 672l672 -672M-249 672l672 -672M-244.3 672l672 -672M-239.6 672l672 -672M-234.9 672l672 -672M-230.2 672l672 -672M-225.5 672l672 -672M-220.8 672l672 -672M-216.1 672l672 -672M-211.4 672l672 -672M-206.7 672l672 -672M-202 672l672 -672M-197.3 672l672 -672M-192.6 672l672 -672M-187.9 672l672 -672M-183.2 672l672 -672M-178.5 672l672 -672M-173.8 672l672 -672M-169.1 672l672 -672M-164.4 672l672 -672M-159.7 672l672 -672M-155 672l672 -672M-150.3 672l672 -672M-145.6 672l672 -672M-140.9 672l672 -672M-136.2 672l672 -672M-131.5 672l672 -672M-126.8 672l672 -672M-122.1 672l672 -672M-117.4 672l672 -672M-112.7 672l672 -672M-108 672l672 -672M-103.3 672l672 -672M-98.6 672l672 -672M-93.9 672l672 -672M-89.2 672l672 -672M-84.5 672l672 -672M-79.8 672l672 -672M-75.1 672l672 -672M-70.4 672l672 -672M-65.7 672l672 -672M-61 672l672 -672M-56.3 672l672 -672M-51.6 672l672 -672M-46.9 672l672 -672M-42.2 672l672 -672M-37.5 672l672 -672M-32.8 672l672 -672M-28.1 672l672 -672M-23.4 672l672 -672M-18.7 672l672 -672M-14 672l672 -672M-9.3 672l672 -672M-4.6 672l672 -672M0.1 672l672 -672M4.8 672l672 -672M9.5 672l672 -672M14.2 672l672 -672M18.9 672l672 -672M23.6 672l672 -672M28.3 672l672 -672M33 672l672 -672M37.7 672l672 -672M42.4 672l672 -672M47.1 672l672 -672M51.8 672l672 -672M56.5 672l672 -672M61.2 672l672 -672M65.9 672l672 -672M70.6 672l672 -672M75.3 672l672 -672M80 672l672 -672M84.7 672l672 -672M89.4 672l672 -672M94.1 672l672 -672M98.8 672l672 -672M103.5 672l672 -672M108.2 672l672 -672M112.9 672l672 -672M117.6 672l672 -672M122.3 672l672 -672M127 672l672 -672M131.7 672l672 -672M136.4 672l672 -672M141.1 672l672 -672M145.8 672l672 -672M150.5 672l672 -672M155.2 672l672 -672M159.9 672l672 -672M164.6 672l672 -672M169.3 672l672 -672M174 672l672 -672M178.7 672l672 -672M183.4 672l672 -672M188.1 672l672 -672M192.8 672l672 -672M197.5 672l672 -672M202.2 672l672 -672M206.9 672l672 -672M211.6 672l672 -672M216.3 672l672 -672M221 672l672 -672M225.7 672l672 -672M230.4 672l672 -672M235.1 672l672 -672M239.8 672l672 -672M244.5 672l672 -672M249.2 672l672 -672M253.9 672l672 -672M258.6 672l672 -672M263.3 672l672 -672M268 672l672 -672M272.7 672l672 -672M277.4 672l672 -672M282.1 672l672 -672M286.8 672l672 -672M291.5 672l672 -672M296.2 672l672 -672M300.9 672l672 -672M305.6 672l672 -672M310.3 672l672 -672M315 672l672 -672M319.7 672l672 -672M324.4 672l672 -672M329.1 672l672 -672M333.8 672l672 -672M338.5 672l672 -672M343.2 672l672 -672M347.9 672l672 -672M352.6 672l672 -672M357.3 672l672 -672M362 672l672 -672M366.7 672l672 -672M371.4 672l672 -672M376.1 672l672 -672M380.8 672l672 -672M385.5 672l672 -672M390.2 672l672 -672M394.9 672l672 -672M399.6 672l672 -672M404.3 672l672 -672M409 672l672 -672M413.7 672l672 -672M418.4 672l672 -672M423.1 672l672 -672M427.8 672l672 -672M432.5 672l672 -672M437.2 672l672 -672M441.9 672l672 -672M446.6 672l672 -672M451.3 672l672 -672M456 672l672 -672M460.7 672l672 -672M465.4 672l672 -672M470.1 672l672 -672M474.8 672l672 -672M479.5 672l672 -672M484.2 672l672 -672M488.9 672l672 -672M493.6 672l672 -672M498.3 672l672 -672M503 672l672 -672M507.7 672l672 -672M512.4 672l672 -672M517.1 672l672 -672M521.8 672l672 -672M526.5 672l672 -672M531.2 672l672 -672M535.9 672l672 -672M540.6 672l672 -672M545.3 672l672 -672M550 672l672 -672M554.7 672l672 -672M559.4 672l672 -672M564.1 672l672 -672M568.8 672l672 -672M573.5 672l672 -672M578.2 672l672 -672M582.9 672l672 -672M587.6 672l672 -672M592.3 672l672 -672M597 672l672 -672M601.7 672l672 -672M606.4 672l672 -672M611.1 672l672 -672M615.8 672l672 -672M620.5 672l672 -672M625.2 672l672 -672M629.9 672l672 -672M634.6 672l672 -672M639.3 672l672 -672M644 672l672 -672M648.7 672l672 -672M653.4 672l672 -672M658.1 672l672 -672M662.8 672l672 -672M667.5 672l672 -672M672.2 672l672 -672M676.9 672l672 -672M681.6 672l672 -672M686.3 672l672 -672M691 672l672 -672M695.7 672l672 -672M700.4 672l672 -672M705.1 672l672 -672M709.8 672l672 -672M714.5 672l672 -672M719.2 672l672 -672M723.9 672l672 -672M728.6 672l672 -672M733.3 672l672 -672M738 672l672 -672M742.7 672l672 -672M747.4 672l672 -672M752.1 672l672 -672M756.8 672l672 -672M761.5 672l672 -672M766.2 672l672 -672M770.9 672l672 -672M775.6 672l672 -672M780.3 672l672 -672M785 672l672 -672M789.7 672l672 -672M794.4 672l672 -672M799.1 672l672 -672M803.8 672l672 -672M808.5 672l672 -672M813.2 672l672 -672M817.9 672l672 -672M822.6 672l672 -672M827.3 672l672 -672M832 672l672 -672M836.7 672l672 -672M841.4 672l672 -672M846.1 672l672 -672M850.8 672l672 -672M855.5 672l672 -672M860.2 672l672 -672M864.9 672l672 -672M869.6 672l672 -672M874.3 672l672 -672M879 672l672 -672M883.7 672l672 -672M888.4 672l672 -672M893.1 672l672 -672M897.8 672l672 -672M902.5 672l672 -672M907.2 672l672 -672M911.9 672l672 -672M916.6 672l672 -672M921.3 672l672 -672M926 672l672 -672M930.7 672l672 -672M935.4 672l672 -672M940.1 672l672 -672M944.8 672l672 -672M949.5 672l672 -672M954.2 672l672 -672M958.9 672l672 -672M963.6 672l672 -672M968.3 672l672 -672M973 672l672 -672M977.7 672l672 -672M982.4 672l672 -672M987.1 672l672 -672M991.8 672l672 -672M996.5 672l672 -672M1001.2 672l672 -672M1005.9 672l672 -672M1010.6 672l672 -672M1015.3 672l672 -672M1020 672l672 -672M1024.7 672l672 -672M1029.4 672l672 -672M1034.1 672l672 -672M1038.8 672l672 -672M1043.5 672l672 -672M1048.2 672l672 -672M1052.9 672l672 -672M1057.6 672l672 -672M1062.3 672l672 -672M1067 672l672 -672M1071.7 672l672 -672M1076.4 672l672 -672M1081.1 672l672 -672M1085.8 672l672 -672M1090.5 672l672 -672M1095.2 672l672 -672M1099.9 672l672 -672M1104.6 672l672 -672M1109.3 672l672 -672M1114 672l672 -672" clip-path="url(#cp)" stroke="#f5dde8" stroke-width="1.200" fill="none"/>
</svg>
<div class="wl" style="left:189px"></div>
<div class="wl" style="left:378px"></div>
<div class="wl" style="left:567px"></div>
<div class="wl" style="left:756px"></div>
<div class="wl" style="left:945px"></div>
<div class="rl" style="top:7px"></div>
<div class="rl" style="top:163px"></div>
<div class="rl" style="top:315px"></div>
<div class="rl" style="top:467px"></div>
<div class="rl" style="top:623px"></div>
<div class="tl" style="left:135px;top:169px;width:27px;text-align:center">T</div>
<div class="tl" style="left:224px;top:169px">Time off</div>
<div class="tl" style="left:135px;top:321px;width:27px;text-align:center">L</div>
<div class="tl" style="left:891px;top:473px;width:27px;text-align:center">L</div>
<div class="tl" style="left:27px;top:629px;width:27px;text-align:center">L</div>
<div class="tl" style="left:602px;top:629px">Time off</div>
<div class="tl" style="left:791px;top:629px">Time</div>
<div class="b" style="left:28px;top:11px;width:50px;height:125px;background:#4a78d0;border-radius:3px 3px 3px 3px;color:#fff"><div class="t">Support Champion /<br>Customer Success</div><div class="hr">8h</div></div>
<div class="b one" style="left:85px;top:11px;width:77px;height:13px;background:#3a4fb0;border-radius:3px 0px 0px 3px;color:#fff"><div class="t" style="right:37.5px">Development / Engineering</div><div class="hr">0.8h</div></div>
<div class="b" style="left:85px;top:27px;width:77px;height:49px;background:#4a78d0;border-radius:3px 0px 0px 3px;color:#fff"><div class="t">Support Champion / Customer Success</div><div class="hr">3.2h</div></div>
<div class="b" style="left:85px;top:79px;width:77px;height:61px;background:#8bc79c;border-radius:3px 0px 0px 3px;color:#1d3b28"><div class="t">Web app<br>Timer / Product</div><div class="hr">4h</div></div>
<div class="b one" style="left:217px;top:11px;width:134px;height:13px;background:#3a4fb0;border-radius:0px 0px 0px 0px;color:#fff"><div class="t" style="right:37.5px">Development / Engineering</div><div class="hr">0.8h</div></div>
<div class="b" style="left:217px;top:27px;width:134px;height:49px;background:#4a78d0;border-radius:0px 0px 0px 0px;color:#fff"><div class="t">Support Champion / Customer Success</div><div class="hr">3.2h</div></div>
<div class="b" style="left:217px;top:79px;width:134px;height:61px;background:#8bc79c;border-radius:0px 0px 0px 0px;color:#1d3b28"><div class="t">Web app<br>Timer / Product</div><div class="hr">4h</div></div>
<div class="b one" style="left:406px;top:11px;width:107px;height:13px;background:#3a4fb0;border-radius:0px 0px 0px 0px;color:#fff"><div class="t" style="right:37.5px">Development / Engineering</div><div class="hr">0.8h</div></div>
<div class="b" style="left:406px;top:27px;width:107px;height:49px;background:#4a78d0;border-radius:0px 0px 0px 0px;color:#fff"><div class="t">Support Champion / Customer Success</div><div class="hr">3.2h</div></div>
<div class="b" style="left:406px;top:79px;width:107px;height:61px;background:#8bc79c;border-radius:0px 0px 0px 0px;color:#1d3b28"><div class="t">Web app<br>Timer / Product</div><div class="hr">4h</div></div>
<div class="b one" style="left:595px;top:11px;width:134px;height:13px;background:#3a4fb0;border-radius:0px 0px 0px 0px;color:#fff"><div class="t" style="right:37.5px">Development / Engineering</div><div class="hr">0.8h</div></div>
<div class="b" style="left:595px;top:27px;width:134px;height:49px;background:#4a78d0;border-radius:0px 0px 0px 0px;color:#fff"><div class="t">Support Champion / Customer Success</div><div class="hr">3.2h</div></div>
<div class="b" style="left:595px;top:79px;width:134px;height:61px;background:#8bc79c;border-radius:0px 0px 0px 0px;color:#1d3b28"><div class="t">Web app<br>Timer / Product</div><div class="hr">4h</div></div>
<div class="b one" style="left:784px;top:11px;width:50px;height:13px;background:#3a4fb0;border-radius:0px 3px 3px 0px;color:#fff"><div class="t" style="right:37.5px">Development / Engineering</div><div class="hr">0.8h</div></div>
<div class="b" style="left:784px;top:27px;width:50px;height:49px;background:#4a78d0;border-radius:0px 3px 3px 0px;color:#fff"><div class="t">Support Champion / Customer Success</div><div class="hr">3.2h</div></div>
<div class="b" style="left:784px;top:79px;width:50px;height:61px;background:#8bc79c;border-radius:0px 3px 3px 0px;color:#1d3b28"><div class="t">Web app<br>Timer / Product</div><div class="hr">4h</div></div>
<div class="b one" style="left:841px;top:11px;width:77px;height:28.5px;background:#8bc79c;border-radius:3px 0px 0px 3px;color:#1d3b28"><div class="t" style="right:25.5px">Timer / Product</div><div class="hr">2h</div></div>
<div class="b one" style="left:841px;top:43px;width:77px;height:28.5px;background:#c83a96;border-radius:3px 0px 0px 3px;color:#fff"><div class="t" style="right:25.5px">Hiring / Engineering</div><div class="hr">2h</div></div>
<div class="b one" style="left:841px;top:75.5px;width:77px;height:12px;background:#3a4fb0;border-radius:3px 0px 0px 3px;color:#fff"><div class="t" style="right:37.5px">Discovery / Planning</div><div class="hr">0.8h</div></div>
<div class="b one" style="left:841px;top:91px;width:77px;height:28.5px;background:#b97fce;border-radius:3px 0px 0px 3px;color:#fff"><div class="t" style="right:25.5px">Support / Engineering</div><div class="hr">2h</div></div>
<div class="b one" style="left:841px;top:123px;width:77px;height:17px;background:#e0702c;border-radius:3px 0px 0px 3px;color:#fff"><div class="t" style="right:36.5px">SRE Support / Engineering</div><div class="hr">1.2h</div></div>
<div class="b one" style="left:973px;top:11px;width:134px;height:28.5px;background:#8bc79c;border-radius:0px 0px 0px 0px;color:#1d3b28"><div class="t" style="right:25.5px">Timer / Product</div><div class="hr">2h</div></div>
<div class="b one" style="left:973px;top:43px;width:134px;height:28.5px;background:#c83a96;border-radius:0px 0px 0px 0px;color:#fff"><div class="t" style="right:25.5px">Hiring / Engineering</div><div class="hr">2h</div></div>
<div class="b one" style="left:973px;top:75.5px;width:134px;height:12px;background:#3a4fb0;border-radius:0px 0px 0px 0px;color:#fff"><div class="t" style="right:37.5px">Discovery / Planning</div><div class="hr">0.8h</div></div>
<div class="b one" style="left:973px;top:91px;width:134px;height:28.5px;background:#b97fce;border-radius:0px 0px 0px 0px;color:#fff"><div class="t" style="right:25.5px">Support / Engineering</div><div class="hr">2h</div></div>
<div class="b one" style="left:973px;top:123px;width:134px;height:17px;background:#e0702c;border-radius:0px 0px 0px 0px;color:#fff"><div class="t" style="right:36.5px">SRE Support / Engineering</div><div class="hr">1.2h</div></div>
<div class="b nar" style="left:55px;top:167px;width:23px;height:125px;background:#3a4fb0;border-radius:0px 3px 3px 0px;color:#fff"><div class="t">E<br>O</div><div class="hr">8h</div></div>
<div class="b" style="left:85px;top:167px;width:50px;height:125px;background:#3a4fb0;border-radius:3px 0px 0px 3px;color:#fff"><div class="t">Engineering<br>Ops &amp; Maintenance</div><div class="hr">8h</div></div>
<div class="b" style="left:406px;top:167px;width:134px;height:125px;background:#3a4fb0;border-radius:0px 0px 0px 0px;color:#fff"><div class="t">Engineering<br>Ops &amp; Maintenance</div><div class="hr">8h</div></div>
<div class="b" style="left:595px;top:167px;width:134px;height:125px;background:#3a4fb0;border-radius:0px 0px 0px 0px;color:#fff"><div class="t">Engineering<br>Ops &amp; Maintenance</div><div class="hr">8h</div></div>
<div class="b" style="left:784px;top:167px;width:134px;height:125px;background:#3a4fb0;border-radius:0px 0px 0px 0px;color:#fff"><div class="t">Engineering<br>Ops &amp; Maintenance</div><div class="hr">8h</div></div>
<div class="b" style="left:973px;top:167px;width:131px;height:125px;background:#3a4fb0;border-radius:0px 3px 3px 0px;color:#fff"><div class="t">Engineering<br>Ops &amp; Maintenance</div><div class="hr">8h</div></div>
<div class="b" style="left:28px;top:319px;width:50px;height:124.5px;background:#3a5fdc;border-radius:3px 3px 3px 3px;color:#fff"><div class="t">Plan Review /<br>Product</div><div class="hr">8h</div></div>
<div class="b nar" style="left:85px;top:319px;width:23px;height:60.5px;background:#c47aaa;border-radius:3px 0px 0px 3px;color:#fff"><div class="t">E<br>A</div><div class="hr">4h</div></div>
<div class="b nar" style="left:85px;top:383px;width:23px;height:60.5px;background:#c47aaa;border-radius:3px 0px 0px 3px;color:#fff"><div class="t">E<br>A</div><div class="hr">4h</div></div>
<div class="b" style="left:244px;top:319px;width:107px;height:60.5px;background:#c47aaa;border-radius:0px 0px 0px 0px;color:#fff"><div class="t">Engineering / R/RW<br>API Caching / Engineering</div><div class="hr">4h</div></div>
<div class="b" style="left:244px;top:383px;width:107px;height:60.5px;background:#c47aaa;border-radius:0px 0px 0px 0px;color:#fff"><div class="t">Engineering / API Caching<br>API Caching / Engineering</div><div class="hr">4h</div></div>
<div class="b" style="left:406px;top:319px;width:134px;height:60.5px;background:#c47aaa;border-radius:0px 0px 0px 0px;color:#fff"><div class="t">Engineering / R/RW<br>API Caching / Engineering</div><div class="hr">4h</div></div>
<div class="b" style="left:406px;top:383px;width:134px;height:60.5px;background:#c47aaa;border-radius:0px 0px 0px 0px;color:#fff"><div class="t">Engineering / API Caching<br>API Caching / Engineering</div><div class="hr">4h</div></div>
<div class="b" style="left:595px;top:319px;width:134px;height:60.5px;background:#c47aaa;border-radius:0px 0px 0px 0px;color:#fff"><div class="t">Engineering / R/RW<br>API Caching / Engineering</div><div class="hr">4h</div></div>
<div class="b" style="left:595px;top:383px;width:134px;height:60.5px;background:#c47aaa;border-radius:0px 0px 0px 0px;color:#fff"><div class="t">Engineering / API Caching<br>API Caching / Engineering</div><div class="hr">4h</div></div>
<div class="b" style="left:784px;top:319px;width:50px;height:60.5px;background:#c47aaa;border-radius:0px 3px 3px 0px;color:#fff"><div class="t">Engineering / R/RW<br>API Caching / Engineering</div><div class="hr">4h</div></div>
<div class="b" style="left:784px;top:383px;width:50px;height:60.5px;background:#c47aaa;border-radius:0px 3px 3px 0px;color:#fff"><div class="t">Engineering / API Caching<br>API Caching / Engineering</div><div class="hr">4h</div></div>
<div class="b" style="left:841px;top:319px;width:77px;height:60.5px;background:#c47aaa;border-radius:3px 0px 0px 3px;color:#fff"><div class="t">API Caching<br>Engineering</div><div class="hr">4h</div></div>
<div class="b one" style="left:841px;top:383px;width:77px;height:28.5px;background:#e0702c;border-radius:3px 0px 0px 3px;color:#fff"><div class="t" style="right:25.5px">Dependency Updates</div><div class="hr">2h</div></div>
<div class="b one" style="left:841px;top:415.5px;width:77px;height:28px;background:#2e7a3e;border-radius:3px 0px 0px 3px;color:#fff"><div class="t" style="right:25.5px">Rollbar issues / Engineering</div><div class="hr">2h</div></div>
<div class="b" style="left:973px;top:319px;width:134px;height:60.5px;background:#c47aaa;border-radius:0px 0px 0px 0px;color:#fff"><div class="t">API Caching<br>Engineering</div><div class="hr">4h</div></div>
<div class="b one" style="left:973px;top:383px;width:134px;height:28.5px;background:#e0702c;border-radius:0px 0px 0px 0px;color:#fff"><div class="t" style="right:25.5px">Dependency Updates</div><div class="hr">2h</div></div>
<div class="b one" style="left:973px;top:415.5px;width:134px;height:28px;background:#2e7a3e;border-radius:0px 0px 0px 0px;color:#fff"><div class="t" style="right:25.5px">Rollbar issues / Engineering</div><div class="hr">2h</div></div>
<div class="b" style="left:28px;top:471px;width:50px;height:124.5px;background:#8bc79c;border-radius:3px 3px 3px 3px;color:#1d3b28"><div class="t">Timer<br>Product</div><div class="hr">8h</div></div>
<div class="b" style="left:85px;top:471px;width:77px;height:124.5px;background:#8bc79c;border-radius:3px 0px 0px 3px;color:#1d3b28"><div class="t">Web app<br>Timer<br>Product</div><div class="hr">8h</div></div>
<div class="b" style="left:217px;top:471px;width:80px;height:124.5px;background:#8bc79c;border-radius:0px 0px 0px 0px;color:#1d3b28"><div class="t">Web app<br>Timer<br>Product</div><div class="hr">8h</div></div>
<div class="b nar" style="left:325px;top:471px;width:26px;height:124.5px;background:#8bc79c;border-radius:0px 0px 0px 0px;color:#1d3b28"><div class="t">W<br>T<br>P</div><div class="hr">8h</div></div>
<div class="b" style="left:406px;top:471px;width:134px;height:124.5px;background:#8bc79c;border-radius:0px 0px 0px 0px;color:#1d3b28"><div class="t">Web app<br>Timer<br>Product</div><div class="hr">8h</div></div>
<div class="b" style="left:595px;top:471px;width:134px;height:124.5px;background:#8bc79c;border-radius:0px 0px 0px 0px;color:#1d3b28"><div class="t">Web app<br>Timer<br>Product</div><div class="hr">8h</div></div>
<div class="b" style="left:784px;top:471px;width:50px;height:124.5px;background:#8bc79c;border-radius:0px 3px 3px 0px;color:#1d3b28"><div class="t">Web app<br>Timer<br>Product</div><div class="hr">8h</div></div>
<div class="b" style="left:841px;top:471px;width:50px;height:80.5px;background:#8bc79c;border-radius:3px 0px 0px 3px;color:#1d3b28"><div class="t">Timer<br>Product</div><div class="hr">5.2h</div></div>
<div class="b one" style="left:841px;top:555.5px;width:50px;height:28px;background:#4a78d0;border-radius:3px 0px 0px 3px;color:#fff"><div class="t" style="right:25.5px">Support Champion /</div><div class="hr">2h</div></div>
<div class="b one" style="left:841px;top:587px;width:50px;height:12.5px;background:#3f6890;border-radius:3px 0px 0px 3px;color:#fff"><div class="t" style="right:37.5px">Release Manager</div><div class="hr">0.8h</div></div>
<div class="b" style="left:973px;top:471px;width:134px;height:80.5px;background:#8bc79c;border-radius:0px 0px 0px 0px;color:#1d3b28"><div class="t">Timer<br>Product</div><div class="hr">5.2h</div></div>
<div class="b one" style="left:973px;top:555.5px;width:134px;height:28px;background:#4a78d0;border-radius:0px 0px 0px 0px;color:#fff"><div class="t" style="right:25.5px">Support Champion /</div><div class="hr">2h</div></div>
<div class="b one" style="left:973px;top:587px;width:134px;height:12.5px;background:#3f6890;border-radius:0px 0px 0px 0px;color:#fff"><div class="t" style="right:37.5px">Release Manager</div><div class="hr">0.8h</div></div>
<div class="b nar" style="left:55px;top:627px;width:23px;height:68px;background:#86d2c2;border-radius:0px 3px 3px 0px;color:#1d3b38"><div class="t">T<br>E</div></div>
<div class="b" style="left:85px;top:627px;width:50px;height:68px;background:#8a5a3c;border-radius:3px 0px 0px 3px;color:#fff"><div class="t">Group by Tasks<br>Product (Archived)</div></div>
<div class="b" style="left:217px;top:627px;width:134px;height:68px;background:#8a5a3c;border-radius:0px 0px 0px 0px;color:#fff"><div class="t">Group by Tasks<br>Product (Archived)</div></div>
<div class="b" style="left:406px;top:627px;width:131px;height:68px;background:#8a5a3c;border-radius:0px 3px 3px 0px;color:#fff"><div class="t">Group by Tasks<br>Product (Archived)</div></div>
<div class="b nar" style="left:841px;top:627px;width:23px;height:68px;background:#6fa8ea;border-radius:3px 0px 0px 3px;color:#14213d"><div class="t">R<br>P</div></div>
<div class="b nar" style="left:892px;top:627px;width:26px;height:68px;background:#6fa8ea;border-radius:0px 0px 0px 0px;color:#14213d"><div class="t">R<br>P</div></div>
<div class="b" style="left:973px;top:627px;width:134px;height:68px;background:#6fa8ea;border-radius:0px 0px 0px 0px;color:#14213d"><div class="t">Roles<br>Product</div></div>
</div>
<div id="panel"></div>
<div class="btn" style="left:70px;top:68px;width:28px;height:27.500px;background:#fff"></div>
<svg class="abs" style="left:76px;top:73px" width="18" height="17" viewBox="0 0 18 17" fill="none" stroke="#1b2033" stroke-width="1.300" stroke-linecap="round" stroke-linejoin="round"><path d="M1.200 8.300h4.300M1.200 11.800h4.300M1.200 15.300h6.300M13.200 2.600v12.700M9.400 11.600l3.800 3.800 3.800-3.800"/></svg>
<div class="btn" style="left:157px;top:68px;width:103px;height:27.500px;background:#fff"></div>
<div class="abs" style="left:165px;top:74px;font-size:11px;line-height:15px;color:#1b2033;white-space:nowrap;letter-spacing:0px" id="rng">1 Sep - 30 Sep</div>
<svg class="abs" style="left:244.500px;top:78.500px" width="9" height="7" viewBox="0 0 9 7" fill="none" stroke="#1b2033" stroke-width="1.600" stroke-linecap="round" stroke-linejoin="round"><path d="M1.500 1.500l3 3 3-3"/></svg>
<div class="abs" style="left:264px;top:68px;width:50px;height:27.500px;border-radius:6px;background:#fdebe1;color:#c05f38;text-align:center;font-size:14.500px;line-height:27px">8<span style="font-size:10px">h</span></div>
<div class="abs" style="left:62px;top:105px;width:260px;height:1px;background:#e9eaef"></div>
<div class="prow" style="top:112px;height:156px">
<svg class="av" style="top:8.500px" viewBox="0 0 32 32"><rect width="32" height="32" fill="#8c8c8c"/><g filter="url(#bl)"><path d="M3 33C4 25 10 23.500 16.500 23.500S29 25 30 33Z" fill="#585858"/><ellipse cx="16.500" cy="15.500" rx="6" ry="8.500" fill="#9c9c9c"/><path d="M10 14C10 7 13 4.500 16.500 4.500S23 7 23 14L21.600 14C21.600 9 20 7.200 16.500 7.200S11.400 9 11.400 14Z" fill="#3a3a3a"/><path d="M12 14.800h9" stroke="#505050" stroke-width="1.300"/><path d="M13 22c2 1.500 5 1.500 7 0l.500 3h-8z" fill="#6a6a6a"/></g></svg>
<div class="pname" style="top:12.300px">Christian de Witt</div>
<div class="ptitle" style="top:33.400px">Team Lead (Services)</div>
<div class="pdept" style="top:51.700px">Engineering</div>
<div class="tag" style="left:55px;top:76px">Management</div>
<div class="tag" style="left:146px;top:76px">Services</div>
<div class="zero" style="top:10px">0<small>h</small></div>
</div>
<div class="prow" style="top:268px;height:156px">
<svg class="av" style="top:8.500px" viewBox="0 0 32 32"><rect width="32" height="32" fill="#fff"/><g filter="url(#bl)"><ellipse cx="15.500" cy="16.500" rx="10" ry="14.300" fill="#dcae9f"/><ellipse cx="5.600" cy="17" rx="1.300" ry="2.500" fill="#c98e7c"/><ellipse cx="25.400" cy="17" rx="1.300" ry="2.500" fill="#c98e7c"/><ellipse cx="10.500" cy="18" rx="3" ry="2.200" fill="#e8957c"/><ellipse cx="20.500" cy="18" rx="3" ry="2.200" fill="#e8957c"/><path d="M7 20c1 8 4.500 11 8.500 11s7.500-3 8.500-11c-2 3-5 4-8.500 4s-6.500-1-8.500-4z" fill="#9d7868"/><path d="M11.500 20.500c2.500 2 5.500 2 8 0-1 2.500-7 2.500-8 0z" fill="#5a2c2c"/><path d="M10 13.200h4M17 13.200h4" stroke="#8a6a60" stroke-width="1"/></g></svg>
<div class="pname" style="top:12.300px">Colin Ross</div>
<div class="ptitle" style="top:33.400px">Director of Engineering</div>
<div class="pdept" style="top:51.700px">Engineering</div>
<div class="tag" style="left:55px;top:76px">Management</div>
<div class="zero" style="top:10px">0<small>h</small></div>
</div>
<div class="prow" style="top:420px;height:156px">
<svg class="av" style="top:8.500px" viewBox="0 0 32 32"><rect width="32" height="32" fill="#d9c39c"/><g filter="url(#bl)"><path d="M0 0h14v10L0 12z" fill="#efe9df"/><path d="M0 6l8-1 2 10-10 3z" fill="#8c4a2a"/><path d="M0 15l10-1 1 8-11 3z" fill="#16181a"/><path d="M11 10c0-5 4-7 7.500-7s8.500 3 8 12l-2 8h-12z" fill="#c9aa7a"/><ellipse cx="17" cy="15.500" rx="6" ry="8" fill="#e9cbb5"/><path d="M12 9c2-3 7-4 10-1l-1 3c-3-1-6-1-9 1z" fill="#c9a878"/><path d="M2 33c1-8 6-10 14-10 7 0 12 2 14 10z" fill="#dfe3e9"/></g></svg>
<div class="pname" style="top:12.300px">Cristina Soponar</div>
<div class="ptitle" style="top:33.400px">Senior Application Engineer</div>
<div class="pdept" style="top:51.700px">Engineering</div>
<div class="tag" style="left:55px;top:76px">Services</div>
<div class="zero" style="top:10px">0<small>h</small></div>
</div>
<div class="prow" style="top:572px;height:156px">
<svg class="av" style="top:8.500px" viewBox="0 0 32 32"><rect width="32" height="32" fill="#fefefe"/><g filter="url(#bl)"><path d="M11.500 22h9.500l1 5.500c-3 1.500-8.500 1.500-11.500 0z" fill="#e2a987"/><ellipse cx="16.300" cy="13" rx="6.200" ry="9.300" fill="#dba587"/><path d="M10 12c-.500-6 3-8.500 6.300-8.500s6.800 2.500 6.300 8.500c-.800-4-2.800-6-6.300-6s-5.500 2-6.300 6z" fill="#5a3b2c"/><path d="M10.600 15.500c1 5.500 3.500 7.500 5.700 7.500s4.700-2 5.700-7.500c-1.500 1.800-3.500 2-5.700 2s-4.200-.200-5.700-2z" fill="#4c2c22"/><path d="M14 17.300c1.500.600 3.100.600 4.600 0" stroke="#8a3030" stroke-width=".900" fill="none"/></g></svg>
<div class="pname" style="top:12.300px">Fábio Azevedo</div>
<div class="ptitle" style="top:33.400px">Front-end Designer</div>
<div class="pdept" style="top:51.700px">Engineering</div>
<div class="tag" style="left:55px;top:76px">Interfaces</div>
<div class="zero" style="top:10px">0<small>h</small></div>
</div>
<div class="prow" style="top:728px;height:156px">
<svg class="av" style="top:8.500px" viewBox="0 0 32 32"><rect width="32" height="32" fill="#5b5356"/><g filter="url(#bl)"><path d="M0 20c6 2 10 6 32 2v10H0z" fill="#121214"/><ellipse cx="17" cy="16.500" rx="6" ry="8.500" fill="#4b3e3e"/><path d="M11.500 11c0-5 3.500-7.500 7-7.500s8.500 3 8 9.500c-2-4-4-5.500-8-5.500s-5 1-7 3.500z" fill="#171516"/><ellipse cx="24.500" cy="17" rx="2.500" ry="3" fill="#6a5050"/><ellipse cx="8" cy="15" rx="3" ry="4" fill="#6e6266"/><path d="M22 25l5-1v1.500l-5 1z" fill="#c8c8c8"/><path d="M3 21l4 2-1 1z" fill="#a8a8a8"/></g></svg>
<div class="pname" style="top:12.300px">Guido D&#x27;Orsi</div>
<div class="ptitle" style="top:33.400px">Front End Performance Engineer</div>
<div class="pdept" style="top:51.700px">Engineering</div>
<div class="zero" style="top:10px">0<small>h</small></div>
</div>
<div class="abs" style="left:1354px;top:696px;width:48.500px;height:48px;border-radius:9px;background:#fff;box-shadow:0 1px 6px rgba(40,50,90,.06)"></div>
<div class="abs" style="left:1358px;top:700px;width:40.500px;height:40px;border-radius:6px;background:#d5e5fb"></div>
<svg class="abs" style="left:1370px;top:712px" width="16" height="16" viewBox="0 0 16 16" fill="none" stroke="#14182b" stroke-width="1.300" stroke-linejoin="round" stroke-linecap="round"><path d="M1.600 1.800L7 13.500l1.900-4.700L14 7.300z"/><path d="M9.400 9.400l4.800 4.800"/></svg>
</div></body></html>
